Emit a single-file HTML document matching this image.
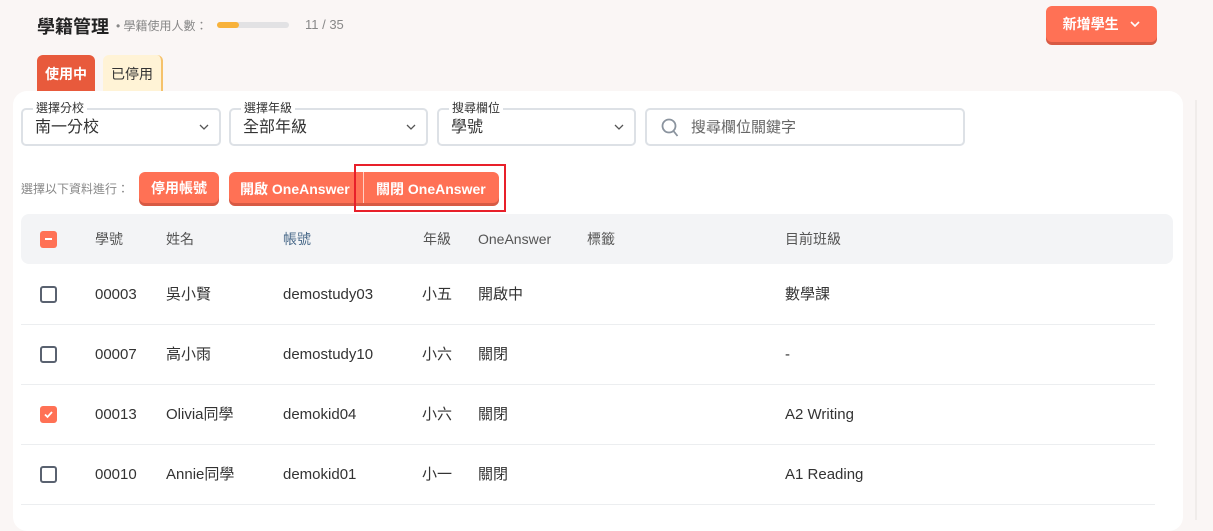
<!DOCTYPE html>
<html><head><meta charset="utf-8"><style>
*{box-sizing:border-box;margin:0;padding:0}
body{width:1213px;height:519px;overflow:hidden;background:#faf6f5;font-family:"Liberation Sans","Noto Sans CJK TC",sans-serif;color:#333;position:relative}
.abs{position:absolute}
.btn{position:absolute;background:#ff7155;color:#fff;font-weight:bold;font-size:14px;border-radius:6px;box-shadow:0 3px 0 #d85a44;display:flex;align-items:center;justify-content:center}
.sel{position:absolute;top:108px;height:38px;border:2px solid #dde1e6;border-radius:5px;background:#fff}
.sel .lb{position:absolute;top:-10px;left:10px;background:#fff;padding:0 3px;font-size:12px;line-height:16px;color:#333}
.sel .v{position:absolute;left:12px;top:0;line-height:36px;font-size:16px;color:#333}
.sel svg{position:absolute;right:10px;top:14px}
.row{position:absolute;left:21px;width:1134px;height:60px;border-bottom:1px solid #eceef0;font-size:15px}
.row span,.hd span{position:absolute;top:0;line-height:60px;white-space:nowrap}
.hd span{line-height:50px}
.cb{position:absolute;left:19px;top:21px;width:17px;height:17px;border:2px solid #5a6270;border-radius:3px}
</style></head><body>
<div class="abs" style="left:37px;top:13px;font-size:18px;font-weight:bold;color:#222">學籍管理</div>
<div class="abs" style="left:116px;top:17px;font-size:12px;color:#888">• 學籍使用人數：</div>
<div class="abs" style="left:217px;top:22px;width:72px;height:6px;background:#e2e2e4;border-radius:3px"><div style="width:22px;height:6px;background:#f8b23a;border-radius:3px"></div></div>
<div class="abs" style="left:305px;top:17px;font-size:13px;color:#888">11 / 35</div>
<div class="btn" style="left:1046px;top:6px;width:111px;height:36px;font-size:14px">新增學生&nbsp;&nbsp;&nbsp;<svg width="10" height="7" viewBox="0 0 10 7"><path d="M1 1l4 4 4-4" stroke="#fff" stroke-width="1.6" fill="none"/></svg></div>
<div class="abs" style="left:37px;top:55px;width:58px;height:38px;background:#e85a3c;border-radius:6px 6px 0 0;color:#fff;font-weight:bold;font-size:14px;text-align:center;line-height:38px">使用中</div>
<div class="abs" style="left:103px;top:55px;width:60px;height:38px;background:#fff3d6;border-right:2px solid #f5c26b;border-radius:6px 6px 0 0;color:#333;font-size:14px;text-align:center;line-height:38px">已停用</div>
<div class="abs" style="left:13px;top:91px;width:1170px;height:440px;background:#fff;border-radius:14px"></div>
<div class="abs" style="left:1195px;top:100px;width:2px;height:420px;background:#f0ecea"></div>
<div class="sel" style="left:21px;width:200px"><div class="lb">選擇分校</div><div class="v">南一分校</div><svg width="10" height="6" viewBox="0 0 10 6"><path d="M1 1l4 4 4-4" stroke="#555" stroke-width="1.3" fill="none"/></svg></div>
<div class="sel" style="left:229px;width:199px"><div class="lb">選擇年級</div><div class="v">全部年級</div><svg width="10" height="6" viewBox="0 0 10 6"><path d="M1 1l4 4 4-4" stroke="#555" stroke-width="1.3" fill="none"/></svg></div>
<div class="sel" style="left:437px;width:199px"><div class="lb">搜尋欄位</div><div class="v">學號</div><svg width="10" height="6" viewBox="0 0 10 6"><path d="M1 1l4 4 4-4" stroke="#555" stroke-width="1.3" fill="none"/></svg></div>
<div class="sel" style="left:645px;width:320px"><svg style="left:14px;top:8px" width="18" height="20" viewBox="0 0 18 20"><circle cx="8" cy="8" r="6.5" stroke="#8a939e" stroke-width="1.8" fill="none"/><path d="M12.5 13l4 5" stroke="#8a939e" stroke-width="1.8"/></svg><div class="v" style="left:44px;color:#666;font-size:15px">搜尋欄位關鍵字</div></div>
<div class="abs" style="left:21px;top:180px;font-size:12px;color:#888">選擇以下資料進行：</div>
<div class="btn" style="left:139px;top:172px;width:80px;height:31px">停用帳號</div>
<div class="btn" style="left:229px;top:172px;width:270px;height:31px"></div>
<div class="abs" style="left:240px;top:179px;color:#fff;font-weight:bold;font-size:14px">開啟 OneAnswer</div>
<div class="abs" style="left:363px;top:172px;width:1px;height:31px;background:#ffd0c5"></div>
<div class="abs" style="left:376px;top:179px;color:#fff;font-weight:bold;font-size:14px">關閉 OneAnswer</div>
<div class="abs" style="left:354px;top:164px;width:152px;height:48px;border:2px solid #e8202a"></div>
<div class="hd abs" style="left:21px;top:214px;width:1152px;height:50px;background:#f3f4f6;border-radius:8px;font-size:14px;color:#555">
<div class="abs" style="left:19px;top:17px;width:17px;height:17px;background:#ff7155;border-radius:3px"><div style="position:absolute;left:5px;top:7px;width:7px;height:2px;background:#fff"></div></div>
<span style="left:74px">學號</span><span style="left:145px">姓名</span><span style="left:262px;color:#4a6a8a">帳號</span><span style="left:402px">年級</span><span style="left:457px">OneAnswer</span><span style="left:566px">標籤</span><span style="left:764px">目前班級</span></div>
<div class="row" style="top:265px"><div class="cb"></div><span style="left:74px">00003</span><span style="left:145px">吳小賢</span><span style="left:262px">demostudy03</span><span style="left:401px">小五</span><span style="left:457px">開啟中</span><span style="left:764px">數學課</span></div>
<div class="row" style="top:325px"><div class="cb"></div><span style="left:74px">00007</span><span style="left:145px">高小雨</span><span style="left:262px">demostudy10</span><span style="left:401px">小六</span><span style="left:457px">關閉</span><span style="left:764px">-</span></div>
<div class="row" style="top:385px"><div class="cb" style="background:#ff7155;border-color:#ff7155"><svg style="position:absolute;left:1px;top:1px" width="11" height="11" viewBox="0 0 11 11"><path d="M2 5.5l2.5 2.5 4.5-5" stroke="#fff" stroke-width="1.8" fill="none"/></svg></div><span style="left:74px">00013</span><span style="left:145px">Olivia同學</span><span style="left:262px">demokid04</span><span style="left:401px">小六</span><span style="left:457px">關閉</span><span style="left:764px">A2 Writing</span></div>
<div class="row" style="top:445px"><div class="cb"></div><span style="left:74px">00010</span><span style="left:145px">Annie同學</span><span style="left:262px">demokid01</span><span style="left:401px">小一</span><span style="left:457px">關閉</span><span style="left:764px">A1 Reading</span></div>
</body></html>
